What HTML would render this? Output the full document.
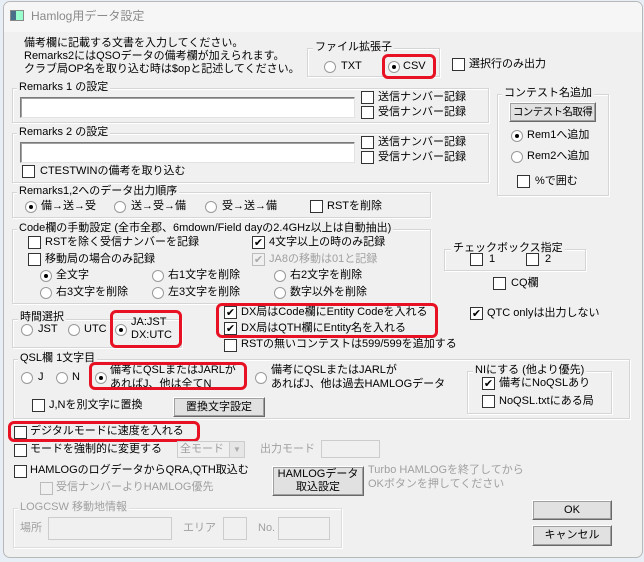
<!DOCTYPE html>
<html><head><meta charset="utf-8">
<style>
*{margin:0;padding:0;box-sizing:border-box}
body{width:644px;height:562px;background:#e8eef5;position:relative;overflow:hidden;font-family:"Liberation Sans","Noto Sans CJK JP",sans-serif;font-size:11px;color:#000}
.win{position:absolute;left:3px;top:1px;width:640px;height:557px;background:#f0f0f0;border:1px solid #b8b8b8;border-radius:7px;overflow:hidden}
.title{position:absolute;left:0;top:0;width:100%;height:30px;background:#f6f6f6}
.t{position:absolute;white-space:nowrap;line-height:13px}
.g{color:#a0a0a0}
.cb{position:absolute;width:13px;height:13px;border:1px solid #333;background:#fff;font-size:11px;line-height:11px;text-align:center;font-family:"DejaVu Sans",sans-serif}
.cb.d{border-color:#bbb;background:#f0f0f0;color:#aaa}
.rd{position:absolute;width:12px;height:12px;border:1px solid #999;border-radius:50%;background:#fff}
.rd.on::after{content:"";position:absolute;left:3px;top:3px;width:4px;height:4px;border-radius:50%;background:#000}
.grp{position:absolute;border:1px solid #d5d5d5;box-shadow:inset 1px 1px 0 #fff,1px 1px 0 #fff}
.lg{position:absolute;background:#f0f0f0;padding:0 2px;white-space:nowrap;line-height:13px}
.in{position:absolute;background:#fff;border:1px solid #7a7a7a;border-right-color:#e3e3e3;border-bottom-color:#e3e3e3;box-shadow:inset 1px 1px 0 #a0a0a0}
.in.d{background:#f0f0f0;border-color:#ccc;box-shadow:none}
.btn{position:absolute;background:#e1e1e1;border:1px solid #fff;border-right-color:#696969;border-bottom-color:#696969;box-shadow:1px 1px 0 #a0a0a0 inset,-1px -1px 0 #a0a0a0 inset;text-align:center;line-height:14px;white-space:nowrap;overflow:hidden}
.red{position:absolute;border:3px solid #e81123;border-radius:6px}
</style></head><body>
<div class="win">
<div class="title"></div>
</div>
<div style="position:absolute;left:10px;top:10px;width:14px;height:11px;background:#4a6f8a;border:1px solid #888"></div>
<div style="position:absolute;left:16px;top:11px;width:7px;height:9px;background:#9fc"></div>
<div class="t" style="left:31px;top:10px;color:#8a8a8a;font-size:12px">Hamlog用データ設定</div>

<div class="t" style="left:24px;top:37px">備考欄に記載する文書を入力してください。</div>
<div class="t" style="left:24px;top:50px">Remarks2にはQSOデータの備考欄が加えられます。</div>
<div class="t" style="left:24px;top:63px">クラブ局OP名を取り込む時は$opと記述してください。</div>

<div class="grp" style="left:307px;top:48px;width:133px;height:29px"></div>
<div class="lg" style="left:313px;top:41px">ファイル拡張子</div>
<div class="rd" style="left:324px;top:61px"></div><div class="t" style="left:341px;top:60px">TXT</div>
<div class="rd on" style="left:388px;top:61px"></div><div class="t" style="left:403px;top:60px">CSV</div>
<div class="red" style="left:382px;top:54px;width:54px;height:25px"></div>
<div class="cb" style="left:452px;top:58px"></div><div class="t" style="left:469px;top:58px">選択行のみ出力</div>

<div class="grp" style="left:12px;top:88px;width:477px;height:35px"></div>
<div class="lg" style="left:17px;top:81px">Remarks 1 の設定</div>
<div class="in" style="left:20px;top:97px;width:335px;height:21px"></div>
<div class="cb" style="left:361px;top:91px"></div><div class="t" style="left:378px;top:91px">送信ナンバー記録</div>
<div class="cb" style="left:361px;top:106px"></div><div class="t" style="left:378px;top:106px">受信ナンバー記録</div>

<div class="grp" style="left:12px;top:133px;width:477px;height:50px"></div>
<div class="lg" style="left:17px;top:126px">Remarks 2 の設定</div>
<div class="in" style="left:20px;top:142px;width:335px;height:21px"></div>
<div class="cb" style="left:361px;top:136px"></div><div class="t" style="left:378px;top:136px">送信ナンバー記録</div>
<div class="cb" style="left:361px;top:151px"></div><div class="t" style="left:378px;top:151px">受信ナンバー記録</div>
<div class="cb" style="left:22px;top:165px"></div><div class="t" style="left:40px;top:165px">CTESTWINの備考を取り込む</div>

<div class="grp" style="left:497px;top:94px;width:112px;height:102px"></div>
<div class="lg" style="left:502px;top:87px">コンテスト名追加</div>
<div class="btn" style="left:509px;top:102px;width:87px;height:20px;line-height:18px;font-size:10.5px;letter-spacing:-0.6px">コンテスト名取得</div>
<div class="rd on" style="left:511px;top:130px"></div><div class="t" style="left:527px;top:129px">Rem1へ追加</div>
<div class="rd" style="left:511px;top:151px"></div><div class="t" style="left:527px;top:150px">Rem2へ追加</div>
<div class="cb" style="left:517px;top:175px"></div><div class="t" style="left:535px;top:175px">%で囲む</div>

<div class="grp" style="left:12px;top:192px;width:419px;height:26px"></div>
<div class="lg" style="left:17px;top:185px">Remarks1,2へのデータ出力順序</div>
<div class="rd on" style="left:25px;top:201px"></div><div class="t" style="left:41px;top:200px">備→送→受</div>
<div class="rd" style="left:114px;top:201px"></div><div class="t" style="left:131px;top:200px">送→受→備</div>
<div class="rd" style="left:205px;top:201px"></div><div class="t" style="left:222px;top:200px">受→送→備</div>
<div class="cb" style="left:310px;top:200px"></div><div class="t" style="left:327px;top:200px">RSTを削除</div>

<div class="grp" style="left:12px;top:229px;width:419px;height:75px"></div>
<div class="lg" style="left:17px;top:222px">Code欄の手動設定 (全市全郡、6mdown/Field dayの2.4GHz以上は自動抽出)</div>
<div class="cb" style="left:28px;top:236px"></div><div class="t" style="left:45px;top:236px">RSTを除く受信ナンバーを記録</div>
<div class="cb" style="left:252px;top:236px">✔</div><div class="t" style="left:269px;top:236px">4文字以上の時のみ記録</div>
<div class="cb" style="left:28px;top:253px"></div><div class="t" style="left:45px;top:253px">移動局の場合のみ記録</div>
<div class="cb d" style="left:252px;top:253px">✔</div><div class="t g" style="left:269px;top:253px">JA8の移動は01と記録</div>
<div class="rd on" style="left:40px;top:270px"></div><div class="t" style="left:56px;top:269px">全文字</div>
<div class="rd" style="left:152px;top:270px"></div><div class="t" style="left:168px;top:269px">右1文字を削除</div>
<div class="rd" style="left:274px;top:270px"></div><div class="t" style="left:290px;top:269px">右2文字を削除</div>
<div class="rd" style="left:40px;top:287px"></div><div class="t" style="left:56px;top:286px">右3文字を削除</div>
<div class="rd" style="left:152px;top:287px"></div><div class="t" style="left:168px;top:286px">左3文字を削除</div>
<div class="rd" style="left:274px;top:287px"></div><div class="t" style="left:290px;top:286px">数字以外を削除</div>

<div class="grp" style="left:444px;top:249px;width:142px;height:22px"></div>
<div class="lg" style="left:451px;top:242px">チェックボックス指定</div>
<div class="cb" style="left:470px;top:253px"></div><div class="t" style="left:489px;top:253px">1</div>
<div class="cb" style="left:526px;top:253px"></div><div class="t" style="left:545px;top:253px">2</div>
<div class="cb" style="left:493px;top:277px"></div><div class="t" style="left:511px;top:277px">CQ欄</div>
<div class="cb" style="left:470px;top:307px">✔</div><div class="t" style="left:487px;top:307px">QTC onlyは出力しない</div>

<div class="grp" style="left:12px;top:319px;width:170px;height:29px"></div>
<div class="lg" style="left:18px;top:311px">時間選択</div>
<div class="rd" style="left:21px;top:324px"></div><div class="t" style="left:38px;top:323px">JST</div>
<div class="rd" style="left:68px;top:324px"></div><div class="t" style="left:84px;top:323px">UTC</div>
<div class="rd on" style="left:115px;top:324px"></div>
<div class="t" style="left:131px;top:316px">JA:JST</div><div class="t" style="left:131px;top:329px">DX:UTC</div>
<div class="red" style="left:110px;top:310px;width:72px;height:38px"></div>

<div class="cb" style="left:224px;top:306px">✔</div><div class="t" style="left:241px;top:306px">DX局はCode欄にEntity Codeを入れる</div>
<div class="cb" style="left:224px;top:322px">✔</div><div class="t" style="left:241px;top:322px">DX局はQTH欄にEntity名を入れる</div>
<div class="cb" style="left:224px;top:339px"></div><div class="t" style="left:241px;top:338px">RSTの無いコンテストは599/599を追加する</div>
<div class="red" style="left:216px;top:303px;width:222px;height:35px"></div>

<div class="grp" style="left:13px;top:359px;width:617px;height:60px"></div>
<div class="lg" style="left:18px;top:352px">QSL欄 1文字目</div>
<div class="rd" style="left:21px;top:372px"></div><div class="t" style="left:38px;top:371px">J</div>
<div class="rd" style="left:56px;top:372px"></div><div class="t" style="left:72px;top:371px">N</div>
<div class="rd on" style="left:95px;top:372px"></div>
<div class="t" style="left:110px;top:364px">備考にQSLまたはJARLが</div><div class="t" style="left:110px;top:378px">あればJ、他は全てN</div>
<div class="red" style="left:89px;top:362px;width:158px;height:28px"></div>
<div class="rd" style="left:255px;top:372px"></div>
<div class="t" style="left:271px;top:364px">備考にQSLまたはJARLが</div><div class="t" style="left:271px;top:378px">あればJ、他は過去HAMLOGデータ</div>
<div class="grp" style="left:467px;top:371px;width:145px;height:43px"></div>
<div class="lg" style="left:473px;top:364px">NIにする (他より優先)</div>
<div class="cb" style="left:482px;top:377px">✔</div><div class="t" style="left:499px;top:377px">備考にNoQSLあり</div>
<div class="cb" style="left:482px;top:395px"></div><div class="t" style="left:499px;top:395px">NoQSL.txtにある局</div>
<div class="cb" style="left:32px;top:399px"></div><div class="t" style="left:49px;top:399px">J,Nを別文字に置換</div>
<div class="btn" style="left:173px;top:397px;width:92px;height:20px;line-height:18px">置換文字設定</div>

<div class="cb" style="left:14px;top:426px"></div><div class="t" style="left:30px;top:425px">デジタルモードに速度を入れる</div>
<div class="red" style="left:8px;top:421px;width:192px;height:21px"></div>
<div class="cb" style="left:14px;top:444px"></div><div class="t" style="left:30px;top:443px">モードを強制的に変更する</div>
<div class="in d" style="left:177px;top:441px;width:68px;height:17px"></div>
<div class="t g" style="left:180px;top:443px">全モード</div>
<div style="position:absolute;left:229px;top:442px;width:15px;height:15px;background:#e6e6e6;border-left:1px solid #ccc;color:#aaa;font-size:8px;text-align:center;line-height:15px">▼</div>
<div class="t g" style="left:260px;top:443px">出力モード</div>
<div class="in d" style="left:321px;top:440px;width:59px;height:18px"></div>
<div class="cb" style="left:14px;top:465px"></div><div class="t" style="left:30px;top:464px">HAMLOGのログデータからQRA,QTH取込む</div>
<div class="cb d" style="left:40px;top:482px"></div><div class="t g" style="left:56px;top:481px">受信ナンバーよりHAMLOG優先</div>
<div class="btn" style="left:272px;top:466px;width:92px;height:30px;line-height:13px;padding-top:1px">HAMLOGデータ<br>取込設定</div>
<div class="t g" style="left:368px;top:464px">Turbo HAMLOGを終了してから</div>
<div class="t g" style="left:368px;top:478px">OKボタンを押してください</div>

<div class="grp" style="left:13px;top:508px;width:329px;height:40px;border-color:#ddd"></div>
<div class="lg g" style="left:18px;top:501px">LOGCSW 移動地情報</div>
<div class="t g" style="left:20px;top:522px">場所</div>
<div class="in d" style="left:48px;top:517px;width:124px;height:23px"></div>
<div class="t g" style="left:183px;top:522px">エリア</div>
<div class="in d" style="left:223px;top:517px;width:24px;height:23px"></div>
<div class="t g" style="left:258px;top:522px">No.</div>
<div class="in d" style="left:278px;top:517px;width:52px;height:23px"></div>

<div class="btn" style="left:532px;top:500px;width:80px;height:20px;line-height:18px">OK</div>
<div class="btn" style="left:532px;top:525px;width:80px;height:21px;line-height:19px">キャンセル</div>
</body></html>
